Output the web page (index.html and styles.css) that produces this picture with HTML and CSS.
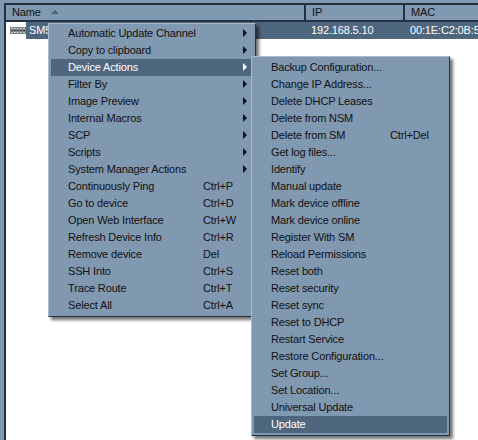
FILE: index.html
```html
<!DOCTYPE html>
<html>
	<head>
		<link rel="stylesheet" href="styles.css">
	</head>
	<body>
	<div class="window">
		<div class="header">
			<div class="col col-name">Name <span class="sort"></span></div>
			<div class="col col-ip">IP</div>
			<div class="col col-mac">MAC</div>
		</div>
		<div class="row">
			<div class="cell-icon">
				<svg class="device" width="16" height="7" viewBox="0 0 16 7">
					<rect x="0" y="0" width="16" height="7" fill="#7d8488"/>
					<path d="M1 1.5h14M1 5.5h14" stroke="#c4c8cb" stroke-width="1" stroke-dasharray="2 1"/>
					<path d="M1 3.5h14" stroke="#3d4549" stroke-width="1" stroke-dasharray="2 1"/>
				</svg>
			</div>
			<div class="cell-name">SM5</div>
			<div class="cell-ip">192.168.5.10</div>
			<div class="cell-mac">00:1E:C2:0B:5</div>
		</div>
	</div>

	<div class="menu main-menu">
		<div class="item"><span>Automatic Update Channel</span><i class="arrow"></i></div>
		<div class="item"><span>Copy to clipboard</span><i class="arrow"></i></div>
		<div class="item active"><span>Device Actions</span><i class="arrow"></i></div>
		<div class="item"><span>Filter By</span><i class="arrow"></i></div>
		<div class="item"><span>Image Preview</span><i class="arrow"></i></div>
		<div class="item"><span>Internal Macros</span><i class="arrow"></i></div>
		<div class="item"><span>SCP</span><i class="arrow"></i></div>
		<div class="item"><span>Scripts</span><i class="arrow"></i></div>
		<div class="item"><span>System Manager Actions</span><i class="arrow"></i></div>
		<div class="item"><span>Continuously Ping</span><b>Ctrl+P</b></div>
		<div class="item"><span>Go to device</span><b>Ctrl+D</b></div>
		<div class="item"><span>Open Web Interface</span><b>Ctrl+W</b></div>
		<div class="item"><span>Refresh Device Info</span><b>Ctrl+R</b></div>
		<div class="item"><span>Remove device</span><b>Del</b></div>
		<div class="item"><span>SSH Into</span><b>Ctrl+S</b></div>
		<div class="item"><span>Trace Route</span><b>Ctrl+T</b></div>
		<div class="item"><span>Select All</span><b>Ctrl+A</b></div>
	</div>

	<div class="menu sub-menu">
		<div class="item"><span>Backup Configuration...</span></div>
		<div class="item"><span>Change IP Address...</span></div>
		<div class="item"><span>Delete DHCP Leases</span></div>
		<div class="item"><span>Delete from NSM</span></div>
		<div class="item"><span>Delete from SM</span><b>Ctrl+Del</b></div>
		<div class="item"><span>Get log files...</span></div>
		<div class="item"><span>Identify</span></div>
		<div class="item"><span>Manual update</span></div>
		<div class="item"><span>Mark device offline</span></div>
		<div class="item"><span>Mark device online</span></div>
		<div class="item"><span>Register With SM</span></div>
		<div class="item"><span>Reload Permissions</span></div>
		<div class="item"><span>Reset both</span></div>
		<div class="item"><span>Reset security</span></div>
		<div class="item"><span>Reset sync</span></div>
		<div class="item"><span>Reset to DHCP</span></div>
		<div class="item"><span>Restart Service</span></div>
		<div class="item"><span>Restore Configuration...</span></div>
		<div class="item"><span>Set Group...</span></div>
		<div class="item"><span>Set Location...</span></div>
		<div class="item"><span>Universal Update</span></div>
		<div class="item active"><span>Update</span></div>
	</div>
	</body>
</html>
```
FILE: styles.css
```css
html, body {
	margin: 0;
	height: 100%;
	overflow: hidden;
}
body {
	background-color: #8098b0;
	font-family: "Liberation Sans", Arial, sans-serif;
	font-size: 11px;
	letter-spacing: -0.15px;
	color: #111;
	padding: 3px 0 0 4px;
	box-sizing: border-box;
}
.window {
	height: 437px;
	background-color: white;
	border-top: 2px solid #24313f;
	border-left: 2px solid #24313f;
}
.header {
	display: flex;
	height: 15px;
	background-color: #8098b0;
	border-bottom: 2px solid #24313f;
	line-height: 15px;
}
.col {
	box-sizing: border-box;
	padding-left: 6px;
}
.col-name {
	width: 298px;
}
.col-ip {
	width: 99px;
	border-left: 2px solid #24313f;
	padding-left: 6px;
}
.col-mac {
	flex: 1;
	border-left: 2px solid #24313f;
	padding-left: 6px;
}
.sort {
	display: inline-block;
	margin-left: 7px;
	margin-bottom: 2px;
	border-left: 4px solid transparent;
	border-right: 4px solid transparent;
	border-bottom: 4px solid #4d6178;
}
.row {
	display: flex;
	height: 17px;
	line-height: 17px;
	background-color: white;
	color: white;
}
.cell-icon {
	display: flex;
	align-items: center;
	width: 20px;
	padding-left: 4px;
	box-sizing: border-box;
}
.cell-name {
	width: 278px;
	padding-left: 3px;
	box-sizing: border-box;
	background-color: #4f667f;
}
.cell-ip {
	width: 99px;
	padding-left: 7px;
	box-sizing: border-box;
	background-color: #4f667f;
}
.cell-mac {
	flex: 1;
	padding-left: 7px;
	background-color: #4f667f;
	white-space: nowrap;
	overflow: hidden;
}
.menu {
	position: absolute;
	box-sizing: border-box;
	background-color: #8098b0;
	border: 1px solid #24313f;
	border-top-color: #a9bccd;
	border-left-color: #a9bccd;
	box-shadow: 3px 3px 3px rgba(0, 0, 0, 0.55);
	padding: 2px;
}
.main-menu {
	left: 48px;
	top: 23px;
	width: 208px;
	height: 294px;
	padding-top: 1px;
}
.sub-menu {
	left: 251px;
	top: 56px;
	width: 199px;
	height: 380px;
}
.item {
	display: flex;
	height: 17px;
	line-height: 17px;
	padding-left: 17px;
	position: relative;
}
.item span {
	width: 119px;
	white-space: nowrap;
}
.main-menu .item span {
	width: 135px;
}
.item b {
	font-weight: normal;
}
.item.active {
	background-color: #4f667f;
	color: white;
}
.arrow {
	position: absolute;
	right: 6px;
	top: 4px;
	border-left: 4px solid #111;
	border-top: 4px solid transparent;
	border-bottom: 4px solid transparent;
}
.item.active .arrow {
	border-left-color: white;
}
```
